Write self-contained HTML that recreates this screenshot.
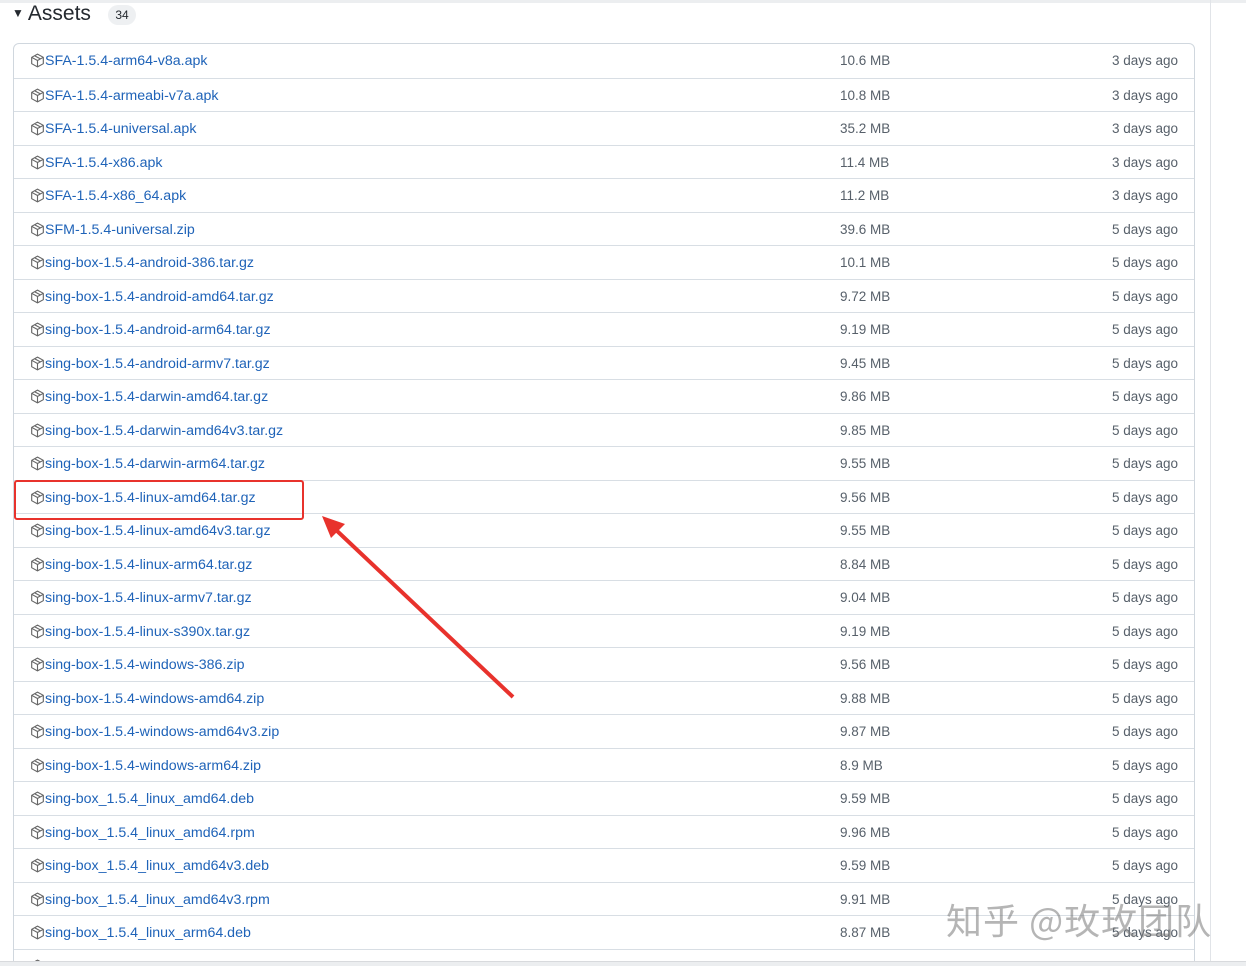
<!DOCTYPE html>
<html><head><meta charset="utf-8"><style>
html,body{margin:0;width:1246px;height:966px;overflow:hidden}
body{background:#fff;font-family:"Liberation Sans","Noto Sans CJK SC",sans-serif;position:relative}
.top{position:absolute;left:0;top:0;width:1246px;height:3px;background:#eceef0}
.bot{position:absolute;left:0;top:961px;width:1246px;height:5px;background:#eceef0;border-top:1px solid #d8dadd;z-index:5}
.vr{position:absolute;left:1210px;top:0;width:1px;height:966px;background:#e1e4e8}
.hd{position:absolute;left:12px;top:2px;font-size:21px;color:#24292f}
.hd .tri{font-size:12px;vertical-align:3px;margin-right:4px}
.cnt{position:absolute;left:108px;top:5px;width:28px;height:20px;border-radius:10px;background:#eef0f2;font-size:12px;color:#24292f;text-align:center;line-height:20px}
.box{position:absolute;left:13px;top:43px;width:1180px;height:940px;border:1px solid #d0d7de;border-radius:6px}
.row{position:absolute;left:14px;width:1180px;height:33.5px;border-top:1px solid #d8dee4;box-sizing:border-box}
.row svg{position:absolute;left:16px;top:9px}
.n{position:absolute;left:31px;top:9px;font-size:14.2px;color:#1f63b8;white-space:nowrap}
.s{position:absolute;left:826px;top:9px;font-size:13.5px;color:#57606a}
.d{position:absolute;right:16px;top:9px;font-size:13.5px;color:#57606a}
.wm{position:absolute;left:946px;top:893px;font-size:36px;color:rgba(120,120,120,.55);letter-spacing:1px;font-family:"Noto Sans CJK SC",sans-serif;z-index:6}
</style></head><body>
<div class="top"></div><div class="vr"></div>
<div class="hd"><span class="tri">▼</span>Assets</div><div class="cnt">34</div>
<div class="box"></div>
<div id="rows"></div>
<script>
var r=[["SFA-1.5.4-arm64-v8a.apk","10.6 MB",3],["SFA-1.5.4-armeabi-v7a.apk","10.8 MB",3],["SFA-1.5.4-universal.apk","35.2 MB",3],["SFA-1.5.4-x86.apk","11.4 MB",3],["SFA-1.5.4-x86_64.apk","11.2 MB",3],["SFM-1.5.4-universal.zip","39.6 MB",5],["sing-box-1.5.4-android-386.tar.gz","10.1 MB",5],["sing-box-1.5.4-android-amd64.tar.gz","9.72 MB",5],["sing-box-1.5.4-android-arm64.tar.gz","9.19 MB",5],["sing-box-1.5.4-android-armv7.tar.gz","9.45 MB",5],["sing-box-1.5.4-darwin-amd64.tar.gz","9.86 MB",5],["sing-box-1.5.4-darwin-amd64v3.tar.gz","9.85 MB",5],["sing-box-1.5.4-darwin-arm64.tar.gz","9.55 MB",5],["sing-box-1.5.4-linux-amd64.tar.gz","9.56 MB",5],["sing-box-1.5.4-linux-amd64v3.tar.gz","9.55 MB",5],["sing-box-1.5.4-linux-arm64.tar.gz","8.84 MB",5],["sing-box-1.5.4-linux-armv7.tar.gz","9.04 MB",5],["sing-box-1.5.4-linux-s390x.tar.gz","9.19 MB",5],["sing-box-1.5.4-windows-386.zip","9.56 MB",5],["sing-box-1.5.4-windows-amd64.zip","9.88 MB",5],["sing-box-1.5.4-windows-amd64v3.zip","9.87 MB",5],["sing-box-1.5.4-windows-arm64.zip","8.9 MB",5],["sing-box_1.5.4_linux_amd64.deb","9.59 MB",5],["sing-box_1.5.4_linux_amd64.rpm","9.96 MB",5],["sing-box_1.5.4_linux_amd64v3.deb","9.59 MB",5],["sing-box_1.5.4_linux_amd64v3.rpm","9.91 MB",5],["sing-box_1.5.4_linux_arm64.deb","8.87 MB",5],["sing-box_1.5.4_linux_arm64.rpm","9.12 MB",5]];
var ic='<svg width="15" height="15" viewBox="0 0 16 16"><path d="M8 1.2L14.2 4.6V11.4L8 14.8L1.8 11.4V4.6Z M1.8 4.6L8 8L14.2 4.6 M8 8V14.8 M4.9 2.9L11.1 6.3" fill="none" stroke="#666" stroke-width="1.2" stroke-linejoin="round"/></svg>';
var h='';
for(var i=0;i<r.length;i++){var t=44+i*33.5;h+='<div class="row" style="top:'+t+'px;'+(i==0?'border-top:none':'')+'">'+ic+'<span class="n">'+r[i][0]+'</span><span class="s">'+r[i][1]+'</span><span class="d">'+r[i][2]+' days ago</span></div>';}
document.getElementById('rows').innerHTML=h;
</script>
<div style="position:absolute;left:14px;top:480px;width:286px;height:36px;border:2px solid #e8322c;border-radius:3px"></div>
<svg style="position:absolute;left:0;top:0" width="1246" height="966"><line x1="513" y1="697" x2="335" y2="529" stroke="#e8322c" stroke-width="4"/><polygon points="322,516 345,524 331,538" fill="#e8322c"/></svg>
<div class="bot"></div>
<div class="wm">知乎 @玫玫团队</div>
</body></html>
